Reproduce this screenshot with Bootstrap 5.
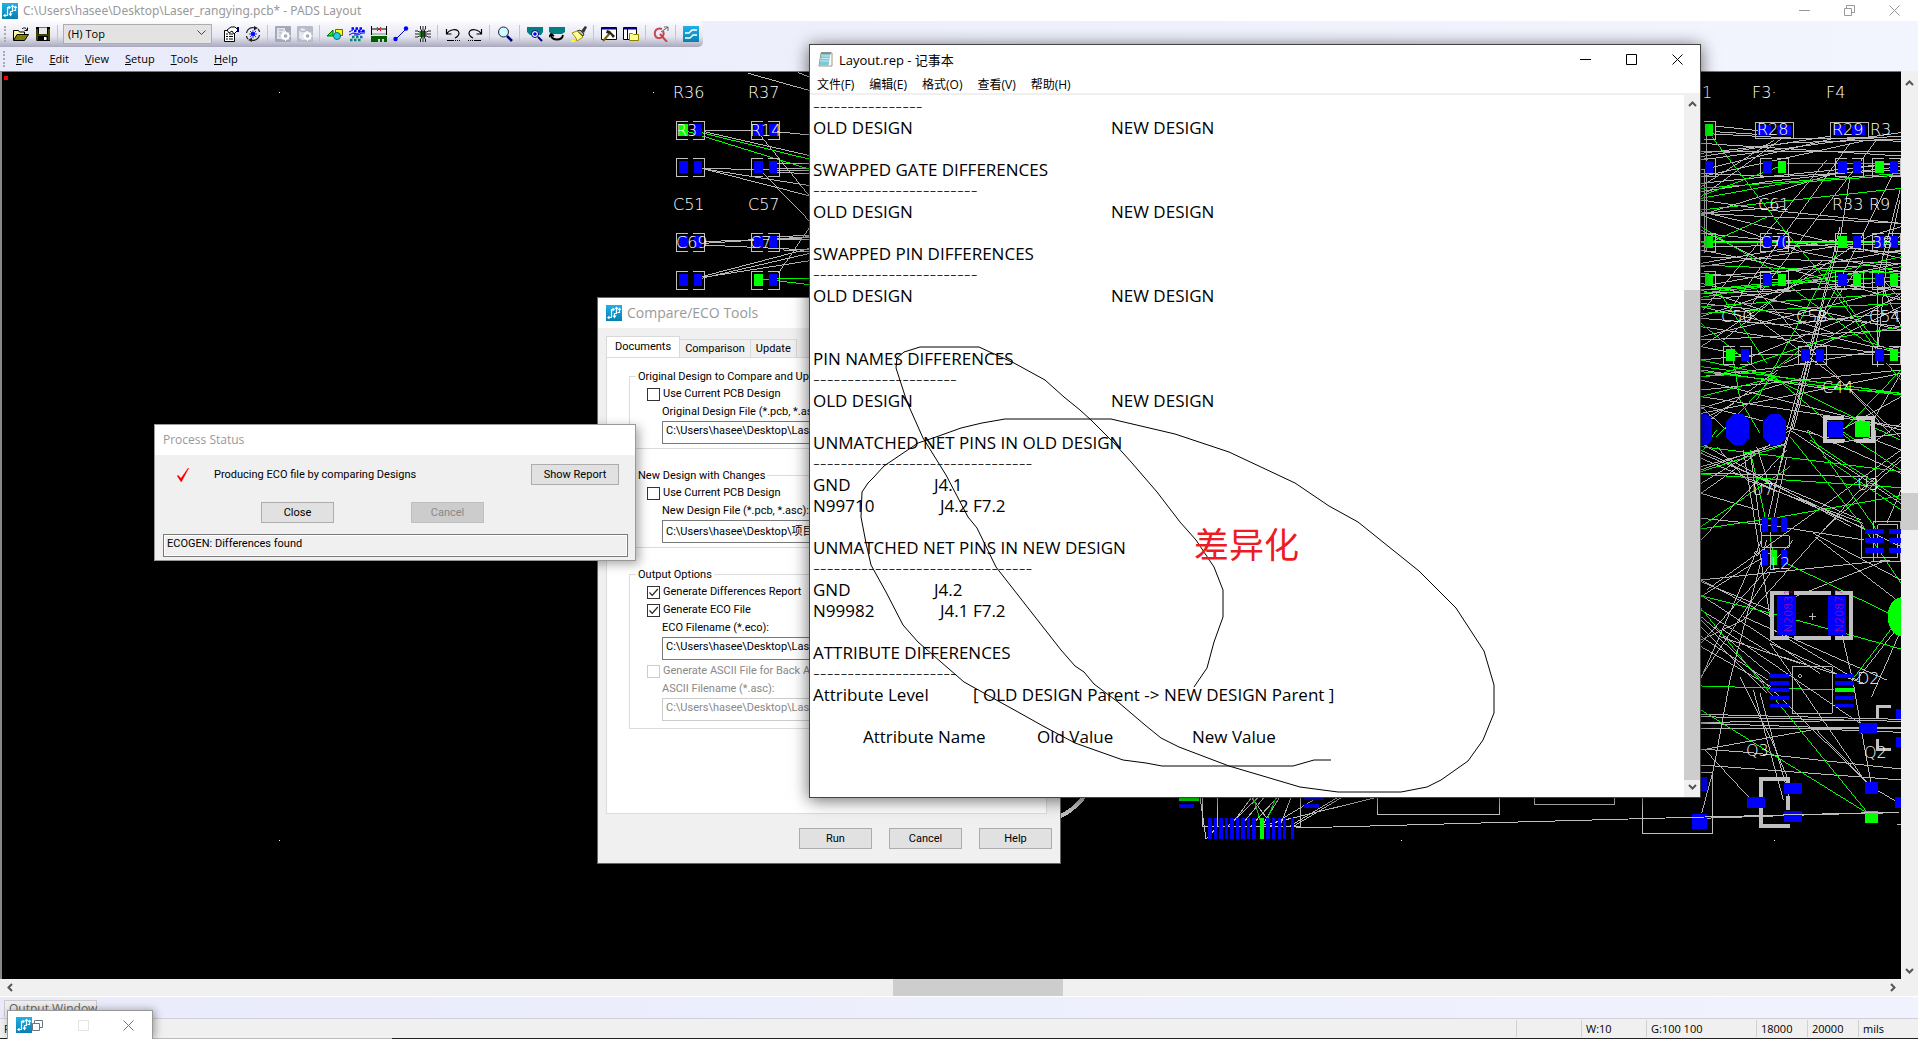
<!DOCTYPE html>
<html lang="en">
<head>
<meta charset="utf-8">
<meta name="viewport" content="width=device-width, initial-scale=1">
<title>PADS Layout</title>
<link href="https://cdn.jsdelivr.net/npm/bootstrap@5.3.0/dist/css/bootstrap.min.css" rel="stylesheet">
<style>
  body { height: 100vh; overflow: hidden; background: #e9ebfa; color: #000; font-family: "Open Sans", "Noto Sans CJK SC", sans-serif; font-size: 12px; line-height: 16px; }
  button { font: inherit; color: inherit; }
  a { color: inherit; text-decoration: none; }
  .plain { border: 0; background: none; padding: 0; }
  .app-title { height: 21px; background: #fff; color: #999; font-size: 12px; padding-left: 2px; gap: 5px; }
  .app-title .caption { font-family: "Noto Sans", sans-serif; }
  .caps { gap: 30px; padding-right: 18px; }
  .app-band { background: linear-gradient(90deg, #e9ebfa, #f3f5fe); height: 50px; }
  .tools { width: 703px; height: 26px; padding: 0 0 0 10px; background: linear-gradient(#fbfbff, #e4e5f0 60%, #a9a9bd); border-radius: 0 4px 5px 0; }
  .tools button { width: 22px; height: 22px; }
  .vsep { width: 1px; height: 18px; margin: 0 4px 0 3px; background: #c4c4d0; }
  .grip { width: 2px; height: 16px; border-left: 2px dotted #a9a9b4; }
  .layer-box { width: 149px; height: 20px; margin: 0 8px 0 1px; padding: 0 4px; border: 1px solid #adadad; border-radius: 0; background: #e3e3e3; font-size: 11px; color: #000; appearance: none; }
  .layer-wrap svg { right: 10px; top: 6px; }
  .menu-row { height: 24px; gap: 16px; padding-left: 3px; font-size: 11px; }
  .menu-row .grip { margin-right: -5px; }
  .menu-row a::first-letter { text-decoration: underline; }
  .board { background: #000; border-top: 1px solid #777; border-left: 2px solid #888; }
  .vbar { width: 17px; background: #f0f0f0; padding: 5px 0; }
  .hbar { height: 18px; background: #f0f0f0; border-bottom: 1px solid #fff; padding: 0 22px 0 7px; }
  .bar-thumb { background: #cdcdcd; }
  .room-a { flex: 407 0 0; } .room-b { flex: 437 0 0; }
  .room-c { flex: 880 0 0; } .room-d { flex: 827 0 0; }
  .dock { height: 22px; padding: 3px 0 0 4px; border-bottom: 1px solid #d0d0d8; background: linear-gradient(90deg, #e9ebfb, #f0f3fe); }
  .dock-tab { width: 93px; background: #efefef; border: 1px solid #ccc; border-bottom: 0; padding-left: 4px; color: #666; white-space: nowrap; }
  .state { height: 19px; background: #f0f0f0; padding-left: 4px; font-size: 11px; }
  .cell { border-left: 1px solid #d0d0d0; padding-left: 4px; height: 17px; width: 51px; line-height: 18px; }
  .cell.c-mid { width: 65px; } .cell.c-wide { width: 110px; } .cell.c-end { width: 60px; }
  .taskline { height: 1px; background: linear-gradient(90deg, #222 48px, #bbb 48px, #bbb 392px, #222 392px); }

  .win { position: absolute; background: #f0f0f0; border: 1px solid #666; }
  .win-cap { background: #fff; color: #999; }
  .dlg { font-family: Roboto, "Noto Sans CJK SC", sans-serif; font-size: 11px; line-height: 14px; }
  .push { height: 21px; width: 73px; background: #e1e1e1; border: 1px solid #adadad; padding: 0; }
  .push:disabled { background: #ccc; border-color: #bfbfbf; color: #888; }
  .w-eco { left: 597px; top: 297px; width: 464px; }
  .w-eco .win-cap { height: 30px; padding-left: 8px; gap: 5px; font: 14px/18px "Open Sans", sans-serif; }
  .tabrow { padding: 8px 0 0 8px; }
  .tabrow button { border: 1px solid #d9d9d9; border-bottom: 0; border-left: 0; background: #f0f0f0; height: 18px; padding: 0 5px; }
  .tabrow button.on { background: #fff; height: 21px; border-left: 1px solid #d9d9d9; padding: 0 8px; }
  .pane { margin: 0 13px 0 8px; height: 457px; padding: 12px 22px 0; background: #fff; border: 1px solid #dcdcdc; }
  .pane fieldset { border: 1px solid #dcdcdc; padding: 4px 8px 4px 17px; margin-bottom: 20px; }
  .pane fieldset.last { padding-bottom: 7px; }
  .pane legend { float: none; width: auto; font-size: 11px; line-height: 13px; padding: 0 2px; margin: 0 0 0 -11px; }
  .line-set { display: flex; flex-direction: column; gap: 4px; white-space: nowrap; }
  .tick { display: flex; align-items: center; gap: 3px; height: 14px; }
  .tick input { appearance: none; width: 13px; height: 13px; margin: 0; border: 1px solid #333; background: #fff; }
  .tick input:checked { background: #fff url("data:image/svg+xml,%3Csvg xmlns='http://www.w3.org/2000/svg' viewBox='0 0 11 11'%3E%3Cpath d='M1.5 5.5l2.7 2.8L9.8 2' fill='none' stroke='%23222' stroke-width='1.2'/%3E%3C/svg%3E"); }
  .tick input:disabled { border-color: #ccc; }
  .faded { color: #888; }
  .filebox { margin-left: 15px; }
  .filebox label { display: block; margin-bottom: 2px; }
  .filebox input { display: block; width: 320px; height: 23px; border: 1px solid #7a7a7a; background: #fff; padding: 0 3px 4px; font: inherit; color: inherit; }
  .filebox input:disabled { border-color: #ccc; }
  .push-row { gap: 17px; padding: 14px 8px; }

  .w-status { left: 154px; top: 424px; width: 482px; box-shadow: 3px 3px 10px rgba(0,0,0,.35); border-color: #999; }
  .w-status .win-cap { height: 30px; padding-left: 8px; font: 12px/30px "Open Sans", sans-serif; }
  .w-status .msg { padding: 9px 16px 0 21px; }
  .w-status .choices { gap: 77px; padding: 17px 0 0 106px; }
  .w-status .push.wide { width: 88px; }
  .w-status output { display: block; margin: 11px 7px 3px 8px; height: 23px; border: 1px solid #7a7a7a; padding: 2px 3px; box-shadow: inset 0 0 0 1px #fff; }

  .w-note { left: 809px; top: 44px; width: 892px; background: #fff; border-color: #444; box-shadow: 0 2px 16px rgba(0,0,0,.6); }
  .w-note .win-head { height: 29px; padding: 0 17px 0 8px; gap: 5px; font-size: 13px; }
  .w-note .win-head .caps { padding: 0; gap: 35px; }
  .note-menu { height: 21px; gap: 15px; padding: 3px 0 0 7px; border-bottom: 2px solid #f0f0f0; }
  .note-text { height: 702px; overflow: hidden; padding: 1px 3px; font-family: "Open Sans", sans-serif; font-size: 17px; line-height: 21px; }
  .note-text p { margin: 0; height: 21px; display: flex; white-space: nowrap; }
  .dashes { font-family: "DejaVu Sans", sans-serif; font-weight: 200; font-size: 19px; }
  .k-left { width: 298px; } .k-net { width: 121px; } .k-net2 { width: 127px; } .k-lvl { width: 160px; }
  .k-name { width: 174px; margin-left: 50px; } .k-old { width: 155px; }
  .w-note .vbar { width: 16px; padding: 6px 0 3px; }
  .ink { position: absolute; left: 0; top: 0; pointer-events: none; }
  .remark { position: absolute; left: 1194px; top: 519px; color: #ed1c24; font: 35px/48px "Noto Sans CJK SC", sans-serif; }
  .w-mini { left: 7px; top: 1010px; width: 146px; height: 29px; border-bottom: 0; background: #fff; padding: 0 18px 0 8px; box-shadow: 2px 0 8px rgba(0,0,0,.35); border-color: #999; }

  .thin { fill: none; stroke: #c0c0c0; stroke-width: 1; }
  .tangle { fill: none; stroke: #b8b8b8; stroke-width: 3; }
  .tangle.go { stroke: #00ff00; }
  .silk { fill: none; stroke: #c8c8c8; stroke-width: 4; }
  .pad-b { fill: #0000ff; } .pad-g { fill: #00ff00; }
  .refs { font-family: "DejaVu Sans", sans-serif; font-weight: 200; font-size: 16px; fill: #fff; }
</style>
<script src="https://cdn.jsdelivr.net/npm/bootstrap@5.3.0/dist/js/bootstrap.bundle.min.js"></script>
</head>
<body class="d-flex flex-column position-relative">

<svg width="0" height="0" class="position-absolute" aria-hidden="true">
  <defs>
    <linearGradient id="lg" x1="0" y1="0" x2="0" y2="1"><stop offset="0" stop-color="#1fb1ea"/><stop offset="1" stop-color="#087fb0"/></linearGradient>
    <symbol id="logo" viewBox="0 0 16 16"><path fill="url(#lg)" d="M0 0h16v16H0z"/><path d="M3 12.500h2.500v-8h2M8.500 11V8.500h2V4M11.500 7.500h2V4" fill="none" stroke="#fff" stroke-width="1.200"/><path d="M1 12.500l2.500-2v4zM6.500 2.500l2.500 2-2.500 2zM8.500 4L10.500 1.500 12.500 4zM6.500 10.500h4l-2 3zM11.500 5L13.500 2.500 15.500 5z" fill="#fff"/></symbol>
    <symbol id="x" viewBox="0 0 11 11"><path d="M.5.5l10 10M10.500.5l-10 10" fill="none" stroke="currentColor"/></symbol>
    <symbol id="rest" viewBox="0 0 11 11"><path d="M.5 3.500h7v7h-7zM2.500 3.500v-3h8v7h-3" fill="none" stroke="currentColor"/></symbol>
    <symbol id="up" viewBox="0 0 9 6"><path d="M1 5l3.500-3.500L8 5" fill="none" stroke="#555" stroke-width="2"/></symbol>
    <symbol id="dn" viewBox="0 0 9 6"><path d="M1 1l3.500 3.500L8 1" fill="none" stroke="#555" stroke-width="2"/></symbol>
    <symbol id="lf" viewBox="0 0 6 9"><path d="M5 1L1.500 4.500 5 8" fill="none" stroke="#555" stroke-width="2"/></symbol>
    <symbol id="rt" viewBox="0 0 6 9"><path d="M1 1l3.500 3.500L1 8" fill="none" stroke="#555" stroke-width="2"/></symbol>
    <symbol id="part" viewBox="0 0 29 19"><path d="M12 .5H.5v18H12M17 .5h11.500v18H17" class="thin"/><path d="M3 3h9v12H3z" style="fill:var(--l,#00f)"/><path d="M18 3h8v12h-8z" style="fill:var(--r,#00f)"/></symbol>
  </defs>
</svg>

<header class="app-title d-flex align-items-center">
  <svg width="16" height="16"><use href="#logo"/></svg>
  <span class="caption flex-grow-1">C:\Users\hasee\Desktop\Laser_rangying.pcb* - PADS Layout</span>
  <div class="caps d-flex align-items-center">
    <button class="plain d-flex" aria-label="Minimize"><svg width="11" height="11"><path d="M0 5.500h11" stroke="currentColor"/></svg></button>
    <button class="plain d-flex ms-1" aria-label="Restore"><svg width="11" height="11"><use href="#rest"/></svg></button>
    <button class="plain d-flex ms-1" aria-label="Close"><svg width="11" height="11"><use href="#x"/></svg></button>
  </div>
</header>

<div class="app-band">
  <div class="tools d-flex align-items-center position-relative">
    <span class="grip position-absolute start-0 ms-1"></span>
    <button class="plain" aria-label="Open"><svg width="16" height="16"><path d="M.5 14V4.500h5l1 1.500h5v3" fill="#ffffa0" stroke="#000"/><path d="M.5 14.500L4 8.500h11.500l-4 6z" fill="#808000" stroke="#000"/><path d="M9 3c2-2 4-1 5 1M14.500 1.500v3h-3" fill="none" stroke="#000"/></svg></button>
    <button class="plain" aria-label="Save"><svg width="16" height="16"><path d="M1 1h14v14H2l-1-1z" fill="#000"/><path d="M4 1.500h8V8H4z" fill="#e8e8e8"/><path d="M2 3v11M14 3v11M3 9h10" stroke="#808000"/><path d="M9 11h2.500v3H9z" fill="#fff"/></svg></button>
    <span class="vsep"></span>
    <span class="layer-wrap position-relative"><select class="layer-box" aria-label="Layer"><option>(H) Top</option></select><svg width="9" height="6" class="position-absolute me-1"><path d="M.5.5l4 4 4-4" fill="none" stroke="#444"/></svg></span>
    <button class="plain" aria-label="Properties"><svg width="16" height="16"><path d="M1.500 4.500h10v11h-10z" fill="#fff" stroke="#000"/><path d="M3 8h2m1 0h4M3 10.500h2m1 0h4M3 13h2m1 0h4" stroke="#000"/><path d="M4 4l4-3h4l3 3-4 4-2-3-3 2z" fill="#fff" stroke="#000"/><path d="M14 1h2v5h-2z" fill="#000080"/></svg></button>
    <button class="plain" aria-label="Redraw"><svg width="16" height="16"><path d="M1.500 7C2 3 6 .5 10 2M14.500 9c-.5 4-5 6.500-8.500 5M3 13c-1-1-1.500-2-1.500-3M13 3c1 1 1.500 2 1.500 3" fill="none" stroke="#222" stroke-width="1.200"/><path d="M9 0l4 2-4 2.500zM7 16l-4-2 4-2.500z" fill="#222"/><circle cx="8" cy="8" r="2" fill="#00f"/><path d="M8 4v8M4 8h8M5 5l6 6M11 5l-6 6" stroke="#00f" stroke-width=".8"/></svg></button>
    <span class="vsep"></span>
    <button class="plain" aria-label="Process" disabled><svg width="16" height="16"><rect width="16" height="16" rx="1" fill="#a2aab9"/><path d="M2 2h8v11H2z" fill="#dfe3ea"/><path d="M4 4h4M4 7h3M4 10h2" stroke="#a2aab9"/><circle cx="10.500" cy="10" r="3" fill="none" stroke="#fff" stroke-width="2"/><path d="M10.500 5v10M5.500 10h10M7 6.500l7 7M14 6.500l-7 7" stroke="#fff"/><circle cx="10.500" cy="10" r="1.700" fill="#a2aab9"/></svg></button>
    <button class="plain" aria-label="Model" disabled><svg width="16" height="16"><rect width="16" height="16" rx="1" fill="#b6bcc8"/><path d="M2 4l3-2 5 2v9l-5 1-3-2z" fill="#e4e7ed"/><path d="M2 4l4 2 4-2" fill="none" stroke="#a2aab9"/><circle cx="10.500" cy="10" r="3" fill="none" stroke="#fff" stroke-width="2"/><path d="M10.500 5v10M5.500 10h10M7 6.500l7 7M14 6.500l-7 7" stroke="#fff"/><circle cx="10.500" cy="10" r="1.700" fill="#a2aab9"/></svg></button>
    <span class="vsep"></span>
    <button class="plain" aria-label="Drafting"><svg width="16" height="16"><path d="M8.500 3.500h7v6h-7z" fill="#ffff00" stroke="#806000"/><path d="M0 10l6-6v6z" fill="#0f0" stroke="#060"/><circle cx="10" cy="10" r="3.500" fill="#20d0e0" stroke="#007080"/></svg></button>
    <button class="plain" aria-label="Design"><svg width="16" height="16"><path d="M2.500 2.500h2.500m1.500 0h2.500m1.500 0h2.500M5 5h2.500m1.500 0h2.500m1.500 0h2.500" stroke="#00f" stroke-width="2.500"/><path d="M0 9l4-2 4 1 3-2 5-1M0 6l4-2M5 9l4 0 4-2h3" fill="none" stroke="#00f"/><path d="M1 14h2.500m1.500 0h2.500m1.500 0h2.500M3 11h2.500m1.500 0h2.500m1.500 0h2.500" stroke="#008080" stroke-width="2.500"/></svg></button>
    <button class="plain" aria-label="Dimensioning"><svg width="16" height="16"><path d="M.5 0v9M15.500 0v9M1 3h14" stroke="#000"/><path d="M6 1l2 3 2-3M6 5l2-2 2 2" stroke="#e00" fill="none"/><path d="M0 10h16v6h-3v-3h-2v3H9v-3H7v3H0z" fill="#006000"/><path d="M1 8h14" stroke="#888"/></svg></button>
    <button class="plain" aria-label="Route"><svg width="16" height="16"><path d="M3 13L13 3" stroke="#00c"/><circle cx="2.500" cy="13" r="2.200" fill="#00f"/><circle cx="13" cy="2.500" r="2.200" fill="#00f"/></svg></button>
    <button class="plain" aria-label="Autoroute"><svg width="16" height="16"><path d="M5 5h6v6H5z" fill="#0d0"/><path d="M8 0v16M5.500 0v3l1 1v8l-1 1v3M10.500 0v3l-1 1v8l1 1v3M0 8h16M0 5h3l1 1h8l1-1h3M0 11h3l1-1h8l1 1h3" fill="none" stroke="#222"/></svg></button>
    <span class="vsep"></span>
    <button class="plain" aria-label="Undo"><svg width="16" height="16"><path d="M1.500 3v5h5M2 8C4 3 13 2 14 7c0 3-2 4-4 5" fill="none" stroke="#000" stroke-width="1.200"/><path d="M2 14.500h7m1 0h1m1 0h1m1 0h1" stroke="#000"/></svg></button>
    <button class="plain" aria-label="Redo"><svg width="16" height="16"><path d="M14.500 3v5h-5M14 8C12 3 3 2 2 7c0 3 2 4 4 5" fill="none" stroke="#000" stroke-width="1.200"/><path d="M1 14.500h1m1 0h1m1 0h1m1 0h7" stroke="#000"/></svg></button>
    <span class="vsep"></span>
    <button class="plain" aria-label="Zoom"><svg width="16" height="16"><path d="M10 10l5 5" stroke="#000080" stroke-width="2.500"/><circle cx="6.500" cy="6" r="5" fill="#c8faff" stroke="#223"/><path d="M4 5l3-2M5 8l4-3" stroke="#fff"/></svg></button>
    <span class="vsep"></span>
    <button class="plain" aria-label="View board"><svg width="16" height="16"><path d="M0 1h16v5l-2 3H3L0 6z" fill="#008080"/><circle cx="8" cy="8" r="3.500" fill="#fff" stroke="#008"/><circle cx="8" cy="8" r="1.800" fill="#00f"/><path d="M11 11l4 4" stroke="#000080" stroke-width="2"/></svg></button>
    <button class="plain" aria-label="Flip board"><svg width="16" height="16"><path d="M0 1h16v5l-3 2H3L0 6z" fill="#008080"/><path d="M2 9c1 6 11 6 12 0M0 11l2-3 3 2" fill="none" stroke="#000" stroke-width="1.800"/></svg></button>
    <button class="plain" aria-label="Highlight"><svg width="16" height="16"><path d="M10 5l4-5 2 1-3 6z" fill="#333"/><path d="M6 5l3-1 4 4-1 2z" fill="#bbb" stroke="#333"/><path d="M1 7l5-2 6 6-6 4-1-3z" fill="#ffffa0" stroke="#a09000"/><path d="M0 15h4" stroke="#ff0" stroke-width="2"/></svg></button>
    <span class="vsep"></span>
    <button class="plain" aria-label="Options"><svg width="16" height="16"><path d="M.5 1.500h15v12H.500z" fill="#fff" stroke="#000"/><path d="M1 2.500h14" stroke="#000080" stroke-width="2"/><path d="M2 15l7-8" stroke="#806000" stroke-width="2"/><path d="M6 4l3 1 5 5-2 2-3-4-4-1z" fill="#222"/></svg></button>
    <button class="plain" aria-label="Project explorer"><svg width="16" height="16"><path d="M.5 1.500h13v12H.500z" fill="#fff" stroke="#000"/><path d="M1 2.500h13" stroke="#000080" stroke-width="2"/><path d="M4.500 3v10" stroke="#000"/><path d="M6.500 14.500v-7h3l1 1h5v6z" fill="#ffff90" stroke="#908000"/></svg></button>
    <span class="vsep"></span>
    <button class="plain" aria-label="Quick link"><svg width="16" height="16"><path d="M9 3C4 1 1 5 2 9s6 4 8 1c1-2 1-3 0-5M7 8l7 8" fill="none" stroke="#c5464f" stroke-width="2"/><path d="M8 6l7-5M11 1h4v4" fill="none" stroke="#666"/></svg></button>
    <span class="vsep"></span>
    <button class="plain" aria-label="Router"><svg width="16" height="16"><path fill="url(#lg)" d="M0 0h16v16H0z"/><path d="M2 7h4l3-3h5M2 12h5l3-3h4" fill="none" stroke="#fff" stroke-width="1.400"/></svg></button>
  </div>
  <nav class="menu-row d-flex align-items-center">
    <span class="grip"></span>
    <a href="#" class="d-block">File</a><a href="#" class="d-block">Edit</a><a href="#" class="d-block">View</a><a href="#" class="d-block">Setup</a><a href="#" class="d-block">Tools</a><a href="#" class="d-block">Help</a>
  </nav>
</div>

<main class="d-flex flex-grow-1 overflow-hidden">
  <div class="board flex-grow-1 overflow-hidden">
    <svg width="1899" height="907" viewBox="2 72 1899 907" shape-rendering="crispEdges" role="img" aria-label="Board layout">
      <circle cx="6" cy="78" r="2.500" fill="red"/>
      <path d="M279 92h1M653 92h1M279 840h1M1401 840h1M1774 840h1M1774 466h1" stroke="#fff"/>
      <path d="M1058 817q14-5 26-20" fill="none" stroke="#c0c0c0" stroke-width="4"/>
      <!-- upper left parts -->
      <g transform="translate(640,60) scale(.33333)">
        <path class="tangle" d="M325 40l185 52M475 38l35 14M192 212h140M192 215l318 72M192 325l318 8M185 325l325 83M180 325l330 52M192 545l318 -12M192 550l318 -20M192 555l318 15M185 650l325-85M185 655l325-75M190 652l320-50M408 215l102 10M360 225l150 185M365 335l145 150M410 310h100M410 325h100M410 338l100 2M510 500L415 640M410 540h100M410 530l100-4M430 570l80 6"/>
        <path class="tangle go" d="M145 215l365 113M185 218l325 80M365 658h30M408 655h102M408 662l102 12"/>
      </g>
      <use href="#part" x="676" y="121" width="29" height="19" style="--l:#0f0"/>
      <use href="#part" x="751" y="121" width="29" height="19"/>
      <use href="#part" x="676" y="158" width="29" height="19"/>
      <use href="#part" x="751" y="158" width="29" height="19"/>
      <use href="#part" x="676" y="233" width="29" height="19"/>
      <use href="#part" x="751" y="233" width="29" height="19"/>
      <use href="#part" x="676" y="271" width="29" height="19"/>
      <use href="#part" x="751" y="271" width="29" height="19" style="--l:#0f0"/>
      <!-- right side ratsnest, upper half -->
      <g transform="translate(1690,60) scale(.33333)">
        <path class="tangle" d="M75 198l130 14M75 215l125 8M33 290l390-62M33 280l270-32 330-10M33 250l600 38M33 275l600 0M33 300l600-82M33 330l400-95 200-5M33 370l600-60M33 380l220-140M33 395l200-30 400-45M33 350l500-110 100 4M70 222l230 12 333 4M33 410l250-180M33 340l230 10 370-20M33 460l250-20M33 465l450-140 150-20M33 460l600 30M33 420l200 30 400 40M33 455l600 140M33 465l300 110 300 60M45 330v250M50 225v350M33 545h600M33 560l600-8M33 520l600 60M33 590l600 20M33 610l400-70M33 620l600-90M33 650l600-40M33 640l600 50M33 680l600-110M33 700l600-20M33 720l600-60M33 670l600 140M33 690l400 130M33 730l600 70M33 770l300-100 300-60M33 775l250 20 350-40M33 740l600 140M33 800l600 90M33 830l300-70 300-80M33 840l600-30M33 860l150 30 450-180M33 900l150-15h370M33 930l400 60M33 950l250-30 350-60M33 960l600 150M33 990l600-60M33 1010l600 90M33 1035l350 90M33 1045l300-90M33 1060l600-120M33 1080l100-50M33 1100l230-170M33 1040l110 100M120 750L480 250M180 740L560 240M40 750L410 300M300 1110L370 840 450 540 480 350M305 1110L380 800 520 600M310 1110L400 760 610 340M290 1110l100-360 60-250M560 900L590 600 630 420M563 920V650L630 390M33 860l500-330 100-30M100 840l300-240M150 740l300 220 180 170M200 690l400 430M520 1130L633 940M400 1140l233-130M560 1140l73-50M633 700L420 830M633 740l-350 170M565 650l68 150M580 660l53 60M33 510l180 90M33 570l200 40 400 110"/>
        <path class="tangle go" d="M65 230L270 495 400 650 560 870M290 310h343M33 385l600-45M40 405l240-90M33 450l600-65M33 415l250-45 350-25M33 560l200-90M33 548h600M33 500l230 140M33 615l600 25M33 690l300-30 300-70M33 700l250-30 350-20M33 712l300-50M33 740l600-40M90 700L230 910M33 790l170 140M33 760l600-30M50 690l250-20 333-50M130 900l20 120 60 100M200 1020L440 580M300 680L520 840 633 880M33 900l230 50 370 50M33 920l600 80M33 935l600 70M33 950l210-15M240 940l240 200M633 1000L380 980M33 1010l230-60M240 950l390 190M633 800L400 840 100 940M440 690L560 850M590 910l43 50M80 1130l180-190M250 930l80-60M470 1100L633 930"/>
        <path class="tangle" d="M196 187h115v48H196zM421 187h115v48H421z"/>
      </g>
      <!-- right side ratsnest, lower half -->
      <g transform="translate(1690,430) scale(.33333)">
        <path class="tangle" d="M33 450L600 390M33 455l220 90M33 450l210 110M33 500l220-140M33 640L310 330M33 330L290 60M33 190L300 0M33 160L200 60M33 70l480 200M33 85l490 210M33 40l450 250M33 120l250-90M33 265l200 20 290 45M33 190l170 50M33 60L633 350M33 745L215 330M33 630L160 570 500 190 633 80M160 60L240 560M180 60l35 260M290 20L235 260M300 0L250 185M240 320l50-240M375 320l258 200M400 300L633 90M290 510L590 390M50 480L633 60M556 0v280M555 30l78 30M590 280L633 180M240 170L200 50M33 540l210 130 280 90M33 620l200 130M33 650l210 120M33 560L250 740M33 590l200 200M40 500l350 230M33 740L240 430M100 600L510 880M160 560l430 190M33 570l500 490M150 740l90 180 55 130M230 330L120 750 70 1020 35 1150M33 853l600 15M33 860l600 14M33 880l350 12h250M33 895h600M33 877l450-5M50 957l330-60 253 10M33 957l140 10 460 50M33 1005l600 45M45 960l130 140M33 1165l370-12 220-5M240 640L530 1060 560 1080l60 35M455 610l35 150 25 145 27 150M545 800L633 600M500 750L633 580M240 640l220 100M250 600l250 150M33 1028h35v182h-68M90 620l240 80M80 50l90 100 350 130M33 130l500 10M33 110L290 40M370 310L633 450M190 780l90 330M210 790l90 320M370 890l160 165M300 0l333 220M350 0l283 130M430 40l203-30M620 1183h13"/>
        <path class="tangle go" d="M33 50l600 75M33 125l250-80M33 133l600 40M33 297l230-35 370-65M33 290L300 110M300 20L520 290 633 460M350 0L560 300M360 30l273 180M180 60l45 200M240 320l10 50M290 400L633 568M33 497l220 55 380 105M33 535L530 1145M33 768l400 12M33 840l500 310M605 595L490 745M80 0L33 70M450 0l183 120M400 80L633 240"/>
        <path class="tangle" d="M215 317h83v35h-83zM307 710h120v140H307zM550 275h83v120h-83zM563 285h60v97h-60zM514 283v100h55M356 560h22M367 549v22M243 340v80h12"/>
        <circle class="tangle" cx="330" cy="738" r="5"/><circle class="tangle" cx="200" cy="370" r="6"/>
        <path fill="none" stroke="#c0c0c0" stroke-width="11" d="M297 490h-50v135h50M312 490h110M435 490h48v135h-48M312 625h110M405 0v32h60M550 0v32h-58M603 830h-40v36M563 927v32h40M300 1048h-87v140h87M294 1052v28M294 1097v42"/>
        <path class="pad-b" d="M262 498h56v118h-56zM414 498h54v118h-54zM216 262h18v43h-18zM243 262h18v43h-18zM273 262h18v43h-18zM216 361h18v44h-18zM273 361h18v44h-18zM526 298h56v13h-56zM526 325h56v15h-56zM526 355h56v14h-56zM597 298h36v13h-36zM597 325h36v15h-36zM597 355h36v14h-36zM238 732h60v12h-60zM240 754h58v11h-58zM240 774h58v12h-58zM240 799h58v10h-58zM240 821h58v10h-58zM436 732h56v12h-56zM436 754h56v11h-56zM436 799h56v10h-56zM436 821h56v10h-56zM507 880h54v28h-54zM618 838h15v28h-15zM618 922h15v28h-15zM282 1060h54v31h-54zM171 1102h54v31h-54zM282 1144h54v31h-54zM525 1056h39v35h-39zM615 1102h18v31h-18zM0 1042h51v41H0zM6 1153h45v43H6z"/>
        <path class="pad-g" d="M243 361h18v44h-18zM436 774h56v12h-56zM525 1143h39v36h-39zM633 502a40 58 0 0 0 0 116z"/>
      </g>
      <use href="#part" x="1687" y="121" width="29" height="19" style="--r:#0f0"/>
      <use href="#part" x="1687" y="158" width="29" height="19"/>
      <use href="#part" x="1687" y="233" width="29" height="19" style="--r:#0f0"/>
      <use href="#part" x="1687" y="271" width="29" height="19" style="--r:#0f0"/>
      <path class="pad-b" d="M1758 125h13v10h-13zM1777 125h14v10h-14zM1833 125h13v10h-13zM1852 125h13v10h-13z"/>
      <use href="#part" x="1760" y="158" width="29" height="19" style="--r:#0f0"/>
      <use href="#part" x="1835" y="158" width="29" height="19"/>
      <use href="#part" x="1872" y="158" width="29" height="19" style="--l:#0f0"/>
      <use href="#part" x="1760" y="233" width="29" height="19"/>
      <use href="#part" x="1835" y="233" width="29" height="19" style="--l:#0f0"/>
      <use href="#part" x="1872" y="233" width="29" height="19"/>
      <use href="#part" x="1760" y="271" width="29" height="19" style="--r:#0f0"/>
      <use href="#part" x="1835" y="271" width="29" height="19" style="--r:#0f0"/>
      <use href="#part" x="1872" y="271" width="29" height="19" style="--r:#0f0"/>
      <use href="#part" x="1723" y="346" width="29" height="19" style="--l:#0f0"/>
      <use href="#part" x="1798" y="346" width="29" height="19"/>
      <use href="#part" x="1872" y="346" width="29" height="19" style="--r:#0f0"/>
      <path class="pad-b" d="M1701 414h5l6 6v19l-6 6h-5zM1733 414h9l7 7v17l-7 7h-9l-7-7v-17zM1770 414h9l7 7v17l-7 7h-9l-7-7v-17z"/>
      <path d="M1844 418h-19v23h19M1856 418h17v23h-17" class="silk"/>
      <path class="pad-b" d="M1828 421h15v16h-15z"/><path class="pad-g" d="M1855 421h15v16h-15z"/>
      <!-- connector row under the report window -->
      <path class="thin" d="M1202 790v36h98v-36M1217 790v37l-11 12-6-42M1377 790v24h122v-24M1534 790v14h80v-14M1642 790v43h70v-43M1232 824l25-34M1240 827l30-37M1250 827l34-37M1262 826l22-36M1246 790l25 34M1280 826l14-36M1226 828l40-38M1270 826l60-36M1290 826l60-36M1260 826l147-36M1294 826l60-36M1296 828l370-10 234-6"/>
      <path d="M1251 790l9 30M1279 790l-12 30" fill="none" stroke="#00e000"/>
      <path class="pad-b" d="M1179 804h15v4h-15zM1208 818h4v21h-4zM1214 818h3v21h-3zM1219 818h4v21h-4zM1225 818h3v21h-3zM1230 818h4v21h-4zM1236 818h3v21h-3zM1241 818h4v21h-4zM1247 818h3v21h-3zM1252 818h4v21h-4zM1266 818h4v21h-4zM1272 818h3v21h-3zM1278 818h3v21h-3zM1283 818h3v21h-3zM1291 818h3v21h-3zM1304 804h15v4h-15zM1304 798h20v2h-20z"/>
      <path class="pad-g" d="M1179 798h20v3h-20zM1260 818h4v21h-4z"/>
      <g class="refs">
        <text x="673" y="98">R36</text><text x="748" y="98">R37</text><text x="676" y="136">R3</text><text x="750" y="136">R14</text>
        <text x="673" y="210">C51</text><text x="748" y="210">C57</text><text x="676" y="248">C69</text><text x="750" y="248">C7</text>
        <text x="1702" y="98">1</text><text x="1752" y="98">F3·</text><text x="1826" y="98">F4</text>
        <text x="1757" y="135">R28</text><text x="1832" y="135">R29</text><text x="1870" y="135">R3</text>
        <text x="1758" y="210">C61</text><text x="1832" y="210">R33</text><text x="1869" y="210">R9</text>
        <text x="1760" y="248">C70</text><text x="1872" y="248">38</text>
        <text x="1721" y="322">C50</text><text x="1796" y="322">C58</text><text x="1869" y="322">C54</text>
        <text x="1822" y="393">C44</text><text x="1752" y="495">U7</text><text x="1857" y="490">U3</text><text x="1771" y="569">L2</text>
        <text x="1857" y="684">D2</text><text x="1746" y="756">Q3</text><text x="1864" y="758">Q2</text>
        <text transform="translate(1792 632) rotate(-90)" style="font-size:11px;fill:#d000a0">N20831</text>
        <text transform="translate(1843 632) rotate(-90)" style="font-size:11px;fill:#d000a0">N20877</text>
      </g>
    </svg>
  </div>
  <div class="vbar d-flex flex-column align-items-center">
    <svg width="9" height="6" class="mt-1"><use href="#up"/></svg>
    <span class="room-a"></span>
    <span class="bar-thumb w-100" style="height:37px"></span>
    <span class="room-b"></span>
    <svg width="9" height="6"><use href="#dn"/></svg>
  </div>
</main>
<div class="hbar d-flex align-items-center">
  <svg width="6" height="9"><use href="#lf"/></svg>
  <span class="room-c"></span><span class="bar-thumb h-100" style="width:170px"></span><span class="room-d"></span>
  <svg width="6" height="9"><use href="#rt"/></svg>
</div>
<div class="dock"><div class="dock-tab">Output Window</div></div>
<footer class="state d-flex align-items-center">
  <span class="flex-grow-1">Ready</span>
  <span class="cell c-mid"></span><span class="cell c-mid">W:10</span><span class="cell c-wide">G:100 100</span><span class="cell">18000</span><span class="cell">20000</span><span class="cell c-end">mils</span>
</footer>
<div class="taskline"></div>

<section class="win dlg w-eco" aria-label="Compare/ECO Tools">
  <div class="win-cap d-flex align-items-center"><svg width="16" height="16"><use href="#logo"/></svg><span>Compare/ECO Tools</span></div>
  <div class="tabrow d-flex align-items-end"><button class="on">Documents</button><button>Comparison</button><button>Update</button></div>
  <div class="pane">
    <fieldset><legend>Original Design to Compare and Update</legend>
      <div class="line-set">
        <label class="tick"><input type="checkbox">Use Current PCB Design</label>
        <div class="filebox"><label for="f1">Original Design File (*.pcb, *.asc):</label><input id="f1" value="C:\Users\hasee\Desktop\Laser_rangying.pcb"></div>
      </div></fieldset>
    <fieldset><legend>New Design with Changes</legend>
      <div class="line-set">
        <label class="tick"><input type="checkbox">Use Current PCB Design</label>
        <div class="filebox"><label for="f2">New Design File (*.pcb, *.asc):</label><input id="f2" value="C:\Users\hasee\Desktop\项目"></div>
      </div></fieldset>
    <fieldset class="last"><legend>Output Options</legend>
      <div class="line-set">
        <label class="tick"><input type="checkbox" checked>Generate Differences Report</label>
        <label class="tick"><input type="checkbox" checked>Generate ECO File</label>
        <div class="filebox"><label for="f3">ECO Filename (*.eco):</label><input id="f3" value="C:\Users\hasee\Desktop\Laser.eco"></div>
        <label class="tick faded"><input type="checkbox" disabled>Generate ASCII File for Back Annotation</label>
        <div class="filebox faded"><label for="f4">ASCII Filename (*.asc):</label><input id="f4" disabled value="C:\Users\hasee\Desktop\Laser.asc"></div>
      </div></fieldset>
  </div>
  <div class="push-row d-flex justify-content-end"><button class="push">Run</button><button class="push">Cancel</button><button class="push">Help</button></div>
</section>

<section class="win dlg w-status" aria-label="Process Status">
  <div class="win-cap">Process Status</div>
  <div class="msg d-flex align-items-center"><svg width="14" height="14" class="me-4"><path d="M1 8l1-1 3 3L12 0h1L5.500 14H5z" fill="red"/></svg><span class="flex-grow-1">Producing ECO file by comparing Designs</span><button class="push wide">Show Report</button></div>
  <div class="choices d-flex"><button class="push">Close</button><button class="push" disabled>Cancel</button></div>
  <output>ECOGEN: Differences found</output>
</section>

<section class="win w-note" aria-label="Layout.rep">
  <div class="win-head d-flex align-items-center">
    <svg width="16" height="17"><path d="M3 2h11v13H1z" fill="#fff" stroke="#a09878"/><path d="M3.500 2.500h9l-2 12h-9z" fill="#7cc7d8"/><path d="M4 5h8M3.500 7.500h8M3 10h8" stroke="#c8ecf2"/><path d="M4 1v2m2-2v2m2-2v2m2-2v2m2-2v2" stroke="#555"/></svg>
    <span class="flex-grow-1">Layout.rep - 记事本</span>
    <div class="caps d-flex">
      <button class="plain d-flex" aria-label="Minimize"><svg width="11" height="11"><path d="M0 5.500h11" stroke="#000"/></svg></button>
      <button class="plain d-flex" aria-label="Maximize"><svg width="11" height="11"><path d="M.5.5h10v10H.500z" fill="none" stroke="#000"/></svg></button>
      <button class="plain d-flex" aria-label="Close"><svg width="11" height="11"><use href="#x"/></svg></button>
    </div>
  </div>
  <nav class="note-menu d-flex"><a href="#">文件(F)</a><a href="#">编辑(E)</a><a href="#">格式(O)</a><a href="#">查看(V)</a><a href="#">帮助(H)</a></nav>
  <div class="d-flex">
    <div class="note-text flex-grow-1">
      <p class="dashes">----------------</p>
      <p><span class="k-left">OLD DESIGN</span><span>NEW DESIGN</span></p>
      <p></p>
      <p>SWAPPED GATE DIFFERENCES</p>
      <p class="dashes">------------------------</p>
      <p><span class="k-left">OLD DESIGN</span><span>NEW DESIGN</span></p>
      <p></p>
      <p>SWAPPED PIN DIFFERENCES</p>
      <p class="dashes">------------------------</p>
      <p><span class="k-left">OLD DESIGN</span><span>NEW DESIGN</span></p>
      <p></p>
      <p></p>
      <p>PIN NAMES DIFFERENCES</p>
      <p class="dashes">---------------------</p>
      <p><span class="k-left">OLD DESIGN</span><span>NEW DESIGN</span></p>
      <p></p>
      <p>UNMATCHED NET PINS IN OLD DESIGN</p>
      <p class="dashes">--------------------------------</p>
      <p><span class="k-net">GND</span><span>J4.1</span></p>
      <p><span class="k-net2">N99710</span><span>J4.2 F7.2</span></p>
      <p></p>
      <p>UNMATCHED NET PINS IN NEW DESIGN</p>
      <p class="dashes">--------------------------------</p>
      <p><span class="k-net">GND</span><span>J4.2</span></p>
      <p><span class="k-net2">N99982</span><span>J4.1 F7.2</span></p>
      <p></p>
      <p>ATTRIBUTE DIFFERENCES</p>
      <p class="dashes">---------------------</p>
      <p><span class="k-lvl">Attribute Level</span><span>[ OLD DESIGN Parent -&gt; NEW DESIGN Parent ]</span></p>
      <p></p>
      <p><span class="k-name">Attribute Name</span><span class="k-old">Old Value</span><span>New Value</span></p>
    </div>
    <div class="vbar d-flex flex-column align-items-center">
      <svg width="9" height="6"><use href="#up"/></svg>
      <span class="flex-grow-1"></span>
      <span class="bar-thumb w-100 mb-1" style="height:490px"></span>
      <svg width="9" height="6" class="mb-1"><use href="#dn"/></svg>
    </div>
  </div>
</section>

<section class="win w-mini d-flex align-items-center text-secondary" aria-label="Minimized window">
  <svg width="16" height="16"><use href="#logo"/></svg>
  <button class="plain d-flex" aria-label="Restore"><svg width="11" height="11"><use href="#rest"/></svg></button>
  <span class="flex-grow-1"></span>
  <svg width="11" height="11"><path d="M.5.5h10v10H.500z" fill="none" stroke="#e4e4e4"/></svg>
  <span class="flex-grow-1"></span>
  <button class="plain d-flex" aria-label="Close"><svg width="11" height="11"><use href="#x"/></svg></button>
</section>

<svg class="ink" width="1918" height="1039" fill="none" stroke="#000" aria-hidden="true">
  <path d="M1194 687L1207 668 1214 642 1223 617V590L1214 567 1196 540 1180 522 1157 492 1132 463 1114 443 1091 420 1080 410 1064 397 1045 380 1014 363 979 347H920L904 352 897 358 896 368 907 402 923 438 946 475 968 517 977 528 996 567 1032 613 1061 650 1075 666 1084 672 1094 684 1118 702 1145 725 1161 738 1179 747 1229 766 1300 787 1338 792H1401L1427 787 1441 780 1468 761 1483 740 1494 713V685L1484 651 1456 608 1419 571 1358 522 1329 506 1295 483 1229 452 1175 434 1111 419H1005L982 423 961 428 936 437 918 443 884 466 873 478 868 483 862 492 861 517 866 543 871 565 886 592 903 625 918 642 964 682 1018 712 1043 726 1075 743 1123 760 1146 763 1162 766H1293L1314 760H1331"/>
</svg>
<div class="remark">差异化</div>
</body>
</html>
